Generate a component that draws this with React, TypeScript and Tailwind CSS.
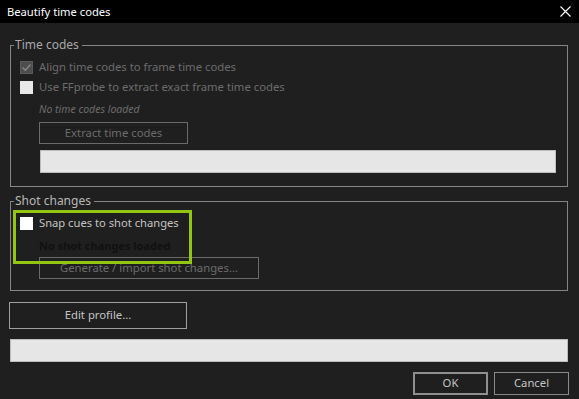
import React from "react";

function Check({ checked, disabled }: { checked?: boolean; disabled?: boolean }) {
  if (checked) {
    return (
      <span className="w-[13px] h-[13px] bg-[#4d4d4d] border border-[#5a5a5a] flex items-center justify-center shrink-0">
        <svg width="11" height="11" viewBox="0 0 11 11">
          <path d="M1.5 5.5 L4.3 8.3 L9.5 2.5" stroke="#8a8a8a" strokeWidth="1.3" fill="none" />
        </svg>
      </span>
    );
  }
  return <span className={"w-[13px] h-[13px] shrink-0 " + (disabled ? "bg-[#e8e8e8]" : "bg-white")} />;
}

export default function App() {
  return (
    <div
      className="w-[579px] h-[399px] bg-[#1f1f1f] flex flex-col text-[11.3px] overflow-hidden relative"
      style={{ fontFamily: '"Noto Sans", "Open Sans", sans-serif' }}
    >
      <div className="h-[23px] bg-black flex items-center justify-between pl-[7px] pr-[8px] shrink-0">
        <span className="text-white text-[11.2px] leading-none">Beautify time codes</span>
        <svg width="11" height="11" viewBox="0 0 11 11" className="mb-[1px]">
          <path d="M0.5 0.5 L10.5 10.5 M10.5 0.5 L0.5 10.5" stroke="#ffffff" strokeWidth="1.1" />
        </svg>
      </div>

      <fieldset className="mt-[14px] ml-[10px] w-[558px] border border-[#858585] pb-[13px]">
        <legend className="ml-[3px] pl-[1px] pr-[3px] text-[#a8a8a8] leading-[16px] text-[12px]">Time codes</legend>
        <div className="flex flex-col">
          <div className="mt-[4px] h-[20px] flex items-center pl-[9px] gap-[6px] text-[#6c6c6c]">
            <Check checked />
            <span>Align time codes to frame time codes</span>
          </div>
          <div className="h-[20px] flex items-center pl-[9px] gap-[6px] text-[#6c6c6c]">
            <Check disabled />
            <span>Use FFprobe to extract exact frame time codes</span>
          </div>
          <div className="mt-[5px] h-[16px] pl-[28px] flex items-center italic text-[10.5px] text-[#6c6c6c]">
            No time codes loaded
          </div>
          <div className="mt-[4px] ml-[28px] w-[149px] h-[22px] border border-[#6a6a6a] flex items-center justify-center text-[#6c6c6c]">
            Extract time codes
          </div>
          <div className="mt-[6px] ml-[29px] w-[516px] h-[23px] bg-[#e6e6e6] border border-[#bcbcbc]" />
        </div>
      </fieldset>

      <fieldset className="mt-[6px] ml-[10px] w-[558px] border border-[#858585] pb-[11px] relative">
        <legend className="ml-[3px] pl-[1px] pr-[3px] text-[#b8b8b8] leading-[16px] text-[12px]">Shot changes</legend>
        <div className="flex flex-col">
          <div className="mt-[4px] h-[20px] flex items-center pl-[9px] gap-[6px] text-[#c4c4c4]">
            <Check />
            <span className="text-[11.2px]">Snap cues to shot changes</span>
          </div>
          <div className="mt-[5px] h-[16px] pl-[28px] flex items-center font-bold text-[11px] text-[#111111]">
            No shot changes loaded
          </div>
          <div className="mt-[3px] ml-[28px] w-[220px] h-[22px] border border-[#6a6a6a] flex items-center justify-center text-[#6c6c6c]">
            Generate / import shot changes...
          </div>
        </div>
        <div className="absolute left-[2px] top-[1px] w-[179px] h-[54px] border-[3px] border-[#93c612] pointer-events-none" />
      </fieldset>

      <div className="mt-[11px] ml-[9px] w-[178px] h-[27px] border border-[#a0a0a0] flex items-center justify-center text-[#c4c4c4]">
        Edit profile...
      </div>
      <div className="mt-[10px] ml-[10px] w-[558px] h-[23px] bg-[#e6e6e6] border border-[#bcbcbc]" />

      <div className="mt-[10px] flex justify-end gap-[6px] pr-[10px]">
        <div className="w-[75px] h-[23px] border-2 border-[#8f8f8f] flex items-center justify-center text-[#c4c4c4]">OK</div>
        <div className="w-[75px] h-[23px] border border-[#8a8a8a] flex items-center justify-center text-[#c4c4c4]">Cancel</div>
      </div>
    </div>
  );
}
